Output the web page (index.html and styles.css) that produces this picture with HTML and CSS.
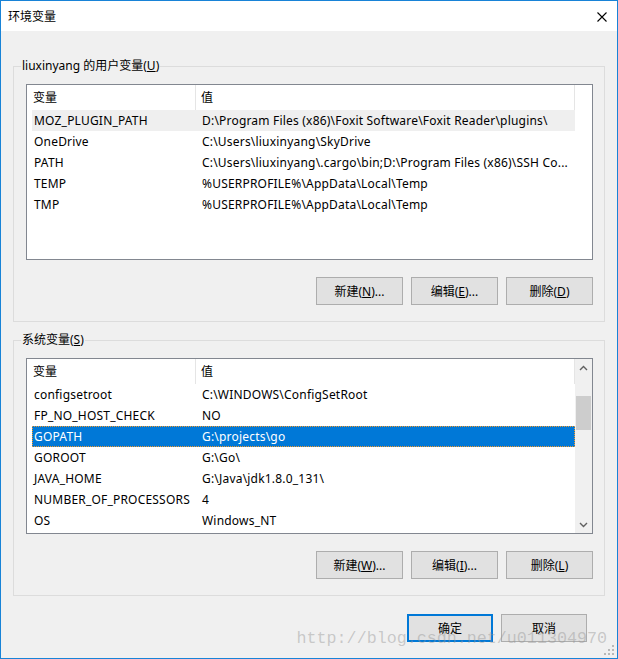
FILE: index.html
```html
<!DOCTYPE html>
<html lang="zh-CN">
<head>
<meta charset="utf-8">
<title>环境变量</title>
<link rel="stylesheet" href="styles.css">
</head>
<body>
<div class="window">
  <div class="titlebar">
    <span class="title">环境变量</span>
    <svg class="close" width="10" height="10" viewBox="0 0 10 10"><path d="M0.5 0.5L9.5 9.5M9.5 0.5L0.5 9.5" stroke="#000" stroke-width="1.1" fill="none"/></svg>
  </div>
  <div class="content">
    <section class="group group-user">
      <span class="legend">liuxinyang 的用户变量(<u>U</u>)</span>
      <div class="listbox">
        <div class="list-main no-scroll">
          <div class="header"><div class="hcol c1">变量</div><div class="hcol c2">值</div></div>
          <div class="row inactive-sel"><span class="c1">MOZ_PLUGIN_PATH</span><span class="c2">D:\Program Files (x86)\Foxit Software\Foxit Reader\plugins\</span></div>
          <div class="row"><span class="c1">OneDrive</span><span class="c2">C:\Users\liuxinyang\SkyDrive</span></div>
          <div class="row"><span class="c1">PATH</span><span class="c2">C:\Users\liuxinyang\.cargo\bin;D:\Program Files (x86)\SSH Co...</span></div>
          <div class="row"><span class="c1">TEMP</span><span class="c2">%USERPROFILE%\AppData\Local\Temp</span></div>
          <div class="row"><span class="c1">TMP</span><span class="c2">%USERPROFILE%\AppData\Local\Temp</span></div>
        </div>
      </div>
      <div class="buttons">
        <button class="btn">新建(<u>N</u>)...</button>
        <button class="btn">编辑(<u>E</u>)...</button>
        <button class="btn">删除(<u>D</u>)</button>
      </div>
    </section>
    <section class="group group-system">
      <span class="legend">系统变量(<u>S</u>)</span>
      <div class="listbox">
        <div class="list-main">
          <div class="header"><div class="hcol c1">变量</div><div class="hcol c2">值</div></div>
          <div class="row"><span class="c1">configsetroot</span><span class="c2">C:\WINDOWS\ConfigSetRoot</span></div>
          <div class="row"><span class="c1">FP_NO_HOST_CHECK</span><span class="c2">NO</span></div>
          <div class="row selected"><span class="c1">GOPATH</span><span class="c2">G:\projects\go</span></div>
          <div class="row"><span class="c1">GOROOT</span><span class="c2">G:\Go\</span></div>
          <div class="row"><span class="c1">JAVA_HOME</span><span class="c2">G:\Java\jdk1.8.0_131\</span></div>
          <div class="row"><span class="c1">NUMBER_OF_PROCESSORS</span><span class="c2">4</span></div>
          <div class="row"><span class="c1">OS</span><span class="c2">Windows_NT</span></div>
        </div>
        <div class="scrollbar">
          <div class="sb-arrow"><svg width="9" height="6" viewBox="0 0 9 6"><path d="M1 5L4.5 1.5L8 5" stroke="#606060" stroke-width="1.4" fill="none"/></svg></div>
          <div class="sb-track"><div class="sb-thumb"></div></div>
          <div class="sb-arrow"><svg width="9" height="6" viewBox="0 0 9 6"><path d="M1 1L4.5 4.5L8 1" stroke="#606060" stroke-width="1.4" fill="none"/></svg></div>
        </div>
      </div>
      <div class="buttons">
        <button class="btn">新建(<u>W</u>)...</button>
        <button class="btn">编辑(<u>I</u>)...</button>
        <button class="btn">删除(<u>L</u>)</button>
      </div>
    </section>
    <div class="dialog-buttons">
      <button class="btn default">确定</button>
      <button class="btn">取消</button>
    </div>
  </div>
  <div class="watermark">http://blog.csdn.net/u011304970</div>
  <svg class="grip" width="12" height="12" viewBox="0 0 12 12">
    <rect x="9" y="1" width="2" height="2" fill="#b8b8b8"/>
    <rect x="5" y="5" width="2" height="2" fill="#b8b8b8"/>
    <rect x="9" y="5" width="2" height="2" fill="#b8b8b8"/>
    <rect x="1" y="9" width="2" height="2" fill="#b8b8b8"/>
    <rect x="5" y="9" width="2" height="2" fill="#b8b8b8"/>
    <rect x="9" y="9" width="2" height="2" fill="#b8b8b8"/>
  </svg>
</div>
</body>
</html>
```

FILE: styles.css
```css
* { box-sizing: border-box; }

body {
  margin: 0;
  font-family: "Noto Sans", "Noto Sans CJK SC", sans-serif;
  font-size: 12px;
  color: #000;
}

.window {
  position: relative;
  width: 618px;
  height: 659px;
  border: 1px solid #1883d7;
  background: #f0f0f0;
  display: flex;
  flex-direction: column;
}

.titlebar {
  height: 30px;
  background: #fff;
  display: flex;
  align-items: center;
  padding-left: 7px;
  padding-right: 10px;
  flex-shrink: 0;
}

.title {
  font-family: "Noto Sans CJK SC", sans-serif;
  font-size: 12px;
  line-height: 16px;
}

.close {
  margin-left: auto;
  display: block;
  margin-top: 1px;
}

.content {
  padding: 0 12px;
  display: flex;
  flex-direction: column;
}

.group {
  position: relative;
  border: 1px solid #dcdcdc;
  padding: 17px 11px 16px 12px;
}

.group-user { margin-top: 35px; }
.group-system { margin-top: 18px; }

.legend {
  position: absolute;
  top: -9px;
  left: 7px;
  padding: 0 1px;
  line-height: 16px;
  background: #f0f0f0;
  white-space: nowrap;
}

.legend u, .btn u { text-underline-offset: 1px; }

.listbox {
  width: 567px;
  height: 176px;
  border: 1px solid #828790;
  background: #fff;
  display: flex;
  overflow: hidden;
}

.list-main {
  flex: 1;
  padding-left: 5px;
  min-width: 0;
}

.list-main.no-scroll { padding-right: 17px; }

.header {
  height: 25px;
  display: flex;
  align-items: stretch;
}

.hcol {
  line-height: 25px;
  border-right: 1px solid #e5e5e5;
  white-space: nowrap;
}

.hcol.c1 { width: 164px; padding-left: 1px; }
.hcol.c2 { flex: 1; padding-left: 5px; }

.row {
  height: 21px;
  line-height: 21px;
  display: flex;
  white-space: nowrap;
  letter-spacing: 0.2px;
}

.row .c1 { width: 163px; padding-left: 2px; overflow: hidden; flex-shrink: 0; }
.row .c2 { flex: 1; padding-left: 7px; overflow: hidden; }

.row.inactive-sel { background: #efefef; }

.row.selected {
  background: #0078d7;
  color: #fff;
  outline: 1px dotted #f29a2e;
  outline-offset: -1px;
}

.scrollbar {
  width: 17px;
  flex-shrink: 0;
  background: #f0f0f0;
  display: flex;
  flex-direction: column;
}

.sb-arrow {
  height: 17px;
  display: flex;
  align-items: center;
  justify-content: center;
}

.sb-arrow svg { display: block; }

.sb-track {
  flex: 1;
  padding: 20px 1px 0 1px;
}

.sb-thumb {
  height: 34px;
  background: #cdcdcd;
}

.buttons {
  margin-top: 17px;
  display: flex;
  justify-content: flex-end;
  gap: 8px;
}

.buttons .btn { width: 87px; }

.btn {
  width: 86px;
  height: 28px;
  border: 1px solid #adadad;
  background: #e1e1e1;
  font-family: "Noto Sans", "Noto Sans CJK SC", sans-serif;
  font-size: 12px;
  color: #000;
  padding: 0;
  margin: 0;
}

.btn.default { border: 2px solid #0078d7; }

.dialog-buttons {
  margin-top: 18px;
  display: flex;
  justify-content: flex-end;
  gap: 8px;
  padding-right: 18px;
}

.watermark {
  position: absolute;
  right: 10px;
  bottom: 10px;
  font-family: "Liberation Mono", monospace;
  font-size: 16.7px;
  color: rgba(150, 150, 150, 0.45);
  white-space: nowrap;
  pointer-events: none;
}

.grip {
  position: absolute;
  right: 2px;
  bottom: 2px;
}
```
